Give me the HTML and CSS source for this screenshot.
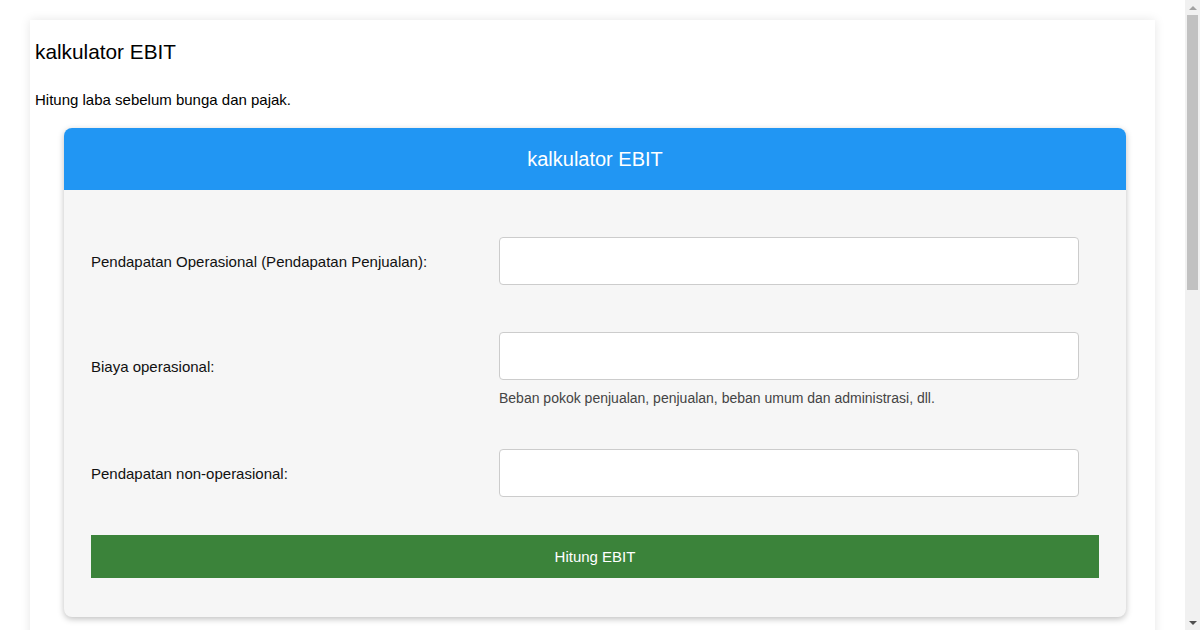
FILE: index.html
```html
<!DOCTYPE html>
<html lang="id">
<head>
<meta charset="utf-8">
<title>kalkulator EBIT</title>
<link rel="stylesheet" href="styles.css">
</head>
<body>
<div class="wrap">
  <h2 class="page-title">kalkulator EBIT</h2>
  <p class="page-desc">Hitung laba sebelum bunga dan pajak.</p>
  <div class="card">
    <div class="card-head">kalkulator EBIT</div>
    <form class="card-body">
      <div class="row row-1">
        <label class="lbl" for="rev">Pendapatan Operasional (Pendapatan Penjualan):</label>
        <div class="field"><input class="inp" id="rev" type="text"></div>
      </div>
      <div class="row row-2">
        <label class="lbl lbl-up" for="cost">Biaya operasional:</label>
        <div class="field">
          <input class="inp" id="cost" type="text">
          <div class="help">Beban pokok penjualan, penjualan, beban umum dan administrasi, dll.</div>
        </div>
      </div>
      <div class="row row-3">
        <label class="lbl" for="nonop">Pendapatan non-operasional:</label>
        <div class="field"><input class="inp" id="nonop" type="text"></div>
      </div>
      <button type="button" class="btn">Hitung EBIT</button>
    </form>
  </div>
</div>
<div class="sb" aria-hidden="true">
  <div class="sb-arrow sb-up"></div>
  <div class="sb-track"><div class="sb-thumb"></div></div>
  <div class="sb-arrow sb-down"></div>
</div>
</body>
</html>
```
FILE: styles.css
```css
html, body {
  margin: 0;
  padding: 0;
  background: #ffffff;
  font-family: "Liberation Sans", Arial, sans-serif;
  color: #111;
}

.wrap {
  box-sizing: border-box;
  width: 1125px;
  margin: 20px 30px;
  padding: 5px 5px 40px;
  background: #fff;
  box-shadow: 0 0 10px rgba(0, 0, 0, 0.1);
  min-height: 1330px;
}

.page-title {
  font-size: 20.8px;
  font-weight: normal;
  margin: 15px 0 0;
  line-height: 24px;
  color: #000;
}

.page-desc {
  font-size: 15px;
  margin: 27px 0 20px;
  line-height: 17px;
  color: #000;
}

.card {
  margin: 0 24px 0 29px;
  border-radius: 8px;
  overflow: hidden;
  background: #f6f6f6;
  box-shadow: 0 2px 6px rgba(0, 0, 0, 0.25);
}

.card-head {
  background: #2196f3;
  color: #fff;
  text-align: center;
  font-size: 20px;
  line-height: 23px;
  padding: 20px 0 19px;
}

.card-body {
  margin: 0;
  padding: 47px 27px 39px;
}

.row {
  display: grid;
  grid-template-columns: 408px 580px;
  align-items: center;
}

.row-1 { margin-bottom: 47px; }
.row-2 { margin-bottom: 43px; }
.row-3 { margin-bottom: 38px; }

.lbl {
  font-size: 15px;
  line-height: 17px;
  color: #111;
}

.lbl-up {
  padding-bottom: 6px;
}

.inp {
  display: block;
  box-sizing: border-box;
  width: 580px;
  height: 48px;
  margin: 0;
  border: 1px solid #ccc;
  border-radius: 4px;
  background: #fff;
  font-family: inherit;
  font-size: 15px;
  padding: 0 10px;
}

.help {
  margin-top: 10px;
  font-size: 14px;
  line-height: 16px;
  color: #444;
}

.btn {
  display: block;
  width: 100%;
  height: 43px;
  border: none;
  border-radius: 0;
  background: #3b833a;
  color: #fff;
  font-family: inherit;
  font-size: 15px;
  line-height: 17px;
  padding: 0;
  cursor: pointer;
}

/* imitation of the window's classic scrollbar */
.sb {
  position: fixed;
  top: 0;
  right: 0;
  width: 15px;
  height: 100vh;
  background: #f1f1f1;
  display: flex;
  flex-direction: column;
}

.sb-arrow {
  height: 15px;
  flex: none;
  display: flex;
  align-items: center;
  justify-content: center;
}

.sb-up::before,
.sb-down::before {
  content: "";
  width: 0;
  height: 0;
  border-left: 4px solid transparent;
  border-right: 4px solid transparent;
}

.sb-up::before {
  border-bottom: 4px solid #a3a3a3;
}

.sb-down::before {
  border-top: 4px solid #505050;
}

.sb-track {
  flex: 1;
  padding: 0 2px;
}

.sb-thumb {
  height: 275px;
  background: #c1c1c1;
}
```
